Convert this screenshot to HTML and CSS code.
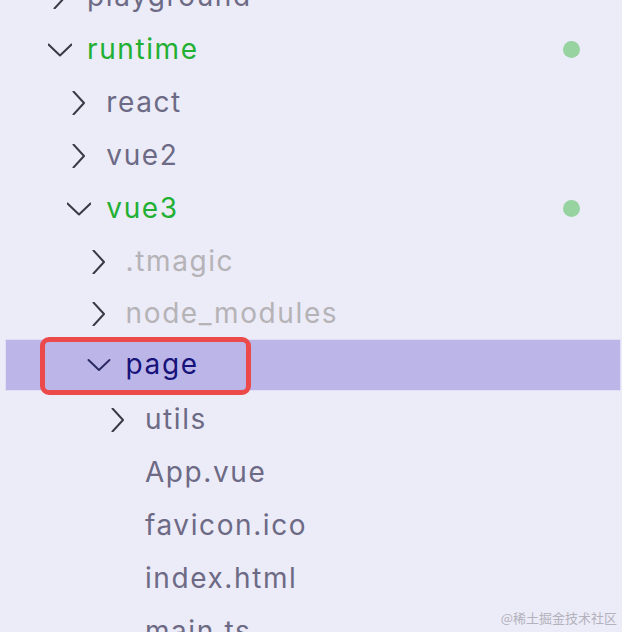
FILE: index.html
```html
<!DOCTYPE html>
<html>
<head>
<meta charset="utf-8">
<link rel="stylesheet" href="styles.css">
</head>
<body>
<div class="view">
  <div class="tree">
    <div class="row l0"><span class="tw"><svg viewBox="0 0 24 24" class="ic"><path d="M6.5 0.5 L17 12 L6.5 23.5"/></svg></span><span class="name">playground</span></div>
    <div class="row l0"><span class="tw"><svg viewBox="0 0 24 24" class="ic"><path d="M0.5 6.5 L12 17.5 L23.5 6.5"/></svg></span><span class="name green">runtime</span><span class="dot"></span></div>
    <div class="row l1"><span class="tw"><svg viewBox="0 0 24 24" class="ic"><path d="M6.5 0.5 L17 12 L6.5 23.5"/></svg></span><span class="name">react</span></div>
    <div class="row l1"><span class="tw"><svg viewBox="0 0 24 24" class="ic"><path d="M6.5 0.5 L17 12 L6.5 23.5"/></svg></span><span class="name">vue2</span></div>
    <div class="row l1"><span class="tw"><svg viewBox="0 0 24 24" class="ic"><path d="M0.5 6.5 L12 17.5 L23.5 6.5"/></svg></span><span class="name green">vue3</span><span class="dot"></span></div>
    <div class="row l2"><span class="tw"><svg viewBox="0 0 24 24" class="ic"><path d="M6.5 0.5 L17 12 L6.5 23.5"/></svg></span><span class="name dim">.tmagic</span></div>
    <div class="row l2"><span class="tw"><svg viewBox="0 0 24 24" class="ic"><path d="M6.5 0.5 L17 12 L6.5 23.5"/></svg></span><span class="name dim">node_modules</span></div>
    <div class="row l2 selected"><span class="tw"><svg viewBox="0 0 24 24" class="ic sm"><path d="M1.5 7 L12 17 L22.5 7"/></svg></span><span class="name sel">page</span><span class="mark"></span></div>
    <div class="row l3"><span class="tw"><svg viewBox="0 0 24 24" class="ic"><path d="M6.5 0.5 L17 12 L6.5 23.5"/></svg></span><span class="name">utils</span></div>
    <div class="row l3"><span class="tw"></span><span class="name">App.vue</span></div>
    <div class="row l3"><span class="tw"></span><span class="name">favicon.ico</span></div>
    <div class="row l3"><span class="tw"></span><span class="name">index.html</span></div>
    <div class="row l3"><span class="tw"></span><span class="name">main.ts</span></div>
  </div>
  <div class="watermark">@稀土掘金技术社区</div>
</div>
</body>
</html>
```
FILE: styles.css
```css
html, body {
  margin: 0;
  padding: 0;
  background: #ecebf8;
}
.view {
  position: relative;
  width: 622px;
  height: 632px;
  overflow: hidden;
  background: #ecebf8;
  font-family: Inter, "Noto Sans", sans-serif;
}
.tree {
  margin-top: -29.4px;
}
.row {
  position: relative;
  display: flex;
  align-items: center;
  height: 52.9px;
  box-sizing: border-box;
  font-size: 28px;
  letter-spacing: 1.6px;
  color: #6c6a84;
}
.l0 { padding-left: 48px; }
.l1 { padding-left: 67.3px; }
.l2 { padding-left: 86.6px; }
.l3 { padding-left: 105.9px; }
.tw {
  flex: none;
  width: 24px;
  height: 24px;
  margin-right: 15px;
  display: flex;
}
.ic {
  width: 24px;
  height: 24px;
  fill: none;
  stroke: #3a3946;
  stroke-width: 2;
  stroke-linecap: round;
  stroke-linejoin: round;
}
.ic.sm {
  stroke: #2c2a62;
}
.name {
  line-height: 1;
  white-space: nowrap;
  padding-bottom: 2px;
}
.green { color: #22b033; }
.dim { color: #b5b3b6; }
.sel { color: #17137a; }
.dot {
  margin-left: auto;
  margin-right: 42.5px;
  width: 17px;
  height: 17px;
  border-radius: 50%;
  background: #97d3a1;
}
.row.selected {
  height: 50px;
  margin: -1px 2px 3.9px 6px;
  padding-left: 80.6px;
  background: #bcb6e8;
  box-shadow: 0 0 0 1px #e2dff5;
}
.mark {
  position: absolute;
  left: 34px;
  top: -3px;
  width: 211px;
  height: 58px;
  box-sizing: border-box;
  border: 5px solid #ec4a4a;
  border-radius: 9px;
}
.watermark {
  position: absolute;
  right: 5px;
  bottom: 5px;
  font-family: "Noto Sans CJK SC", sans-serif;
  font-size: 13px;
  color: #b3b2bc;
}
```
